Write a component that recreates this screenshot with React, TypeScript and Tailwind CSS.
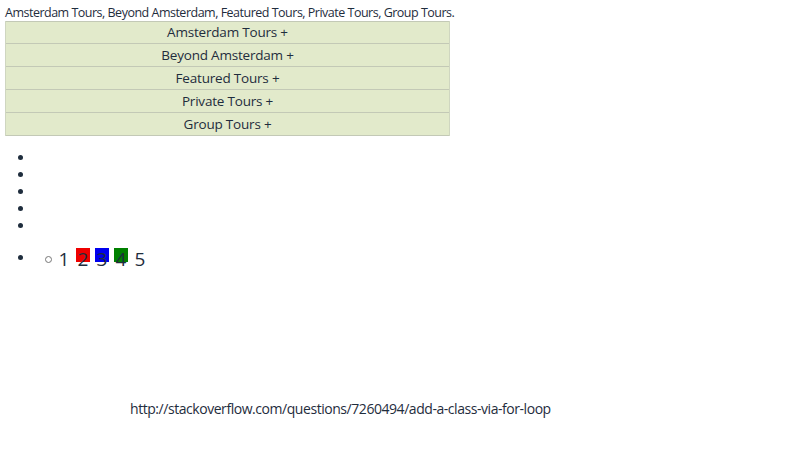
const tours = ['Amsterdam Tours', 'Beyond Amsterdam', 'Featured Tours', 'Private Tours', 'Group Tours']

function Box({ n, color }: { n: number; color?: string }) {
  return (
    <span className="relative mr-[5px] inline-flex w-[14px] justify-center">
      {color && <span className={`absolute left-0 top-[-1px] h-[14px] w-[14px] ${color}`} />}
      <span className="relative">{n}</span>
    </span>
  )
}

export default function App() {
  return (
    <div className="relative h-[450px] w-[800px] bg-white px-[5px] text-[#1f2d3d] [font-family:'Open_Sans',sans-serif]">
      <p className="pt-[5px] text-[12.5px] leading-[16px] tracking-[-0.5px]">
        {tours.join(', ')}.
      </p>
      <div className="w-[445px] border-x border-[#cfd6c0] bg-[#e2eacb]">
        {tours.map((t) => (
          <div key={t} className="flex h-[23px] items-center justify-center border-b border-[#c3c9b6] text-[13.5px] tracking-[-0.2px] first:border-t">
            {t} +
          </div>
        ))}
      </div>

      <ul className="mt-[18px] ml-[13px] flex flex-col gap-[9px]">
        {[0, 1, 2, 3, 4].map((i) => (
          <li key={i} className="h-[8px] w-[5px] rounded-full">
            <span className="mt-[1px] block h-[5px] w-[5px] rounded-full bg-[#1f2d3d]" />
          </li>
        ))}
        <li className="mt-[7px] flex items-center">
          <span className="block h-[5px] w-[5px] rounded-full bg-[#1f2d3d]" />
          <div className="ml-[22px] mt-[3px] flex items-center text-[19px] leading-[20px]">
            <span className="mr-[5px] block h-[7px] w-[7px] rounded-full border border-[#777]" />
            <Box n={1} />
            <Box n={2} color="bg-[#ee0000]" />
            <Box n={3} color="bg-[#0000ee]" />
            <Box n={4} color="bg-[#008000]" />
            <Box n={5} />
          </div>
        </li>
      </ul>

      <p className="absolute left-[130px] top-[398px] text-[14px] tracking-[-0.45px]">
        http://stackoverflow.com/questions/7260494/add-a-class-via-for-loop
      </p>
    </div>
  )
}
